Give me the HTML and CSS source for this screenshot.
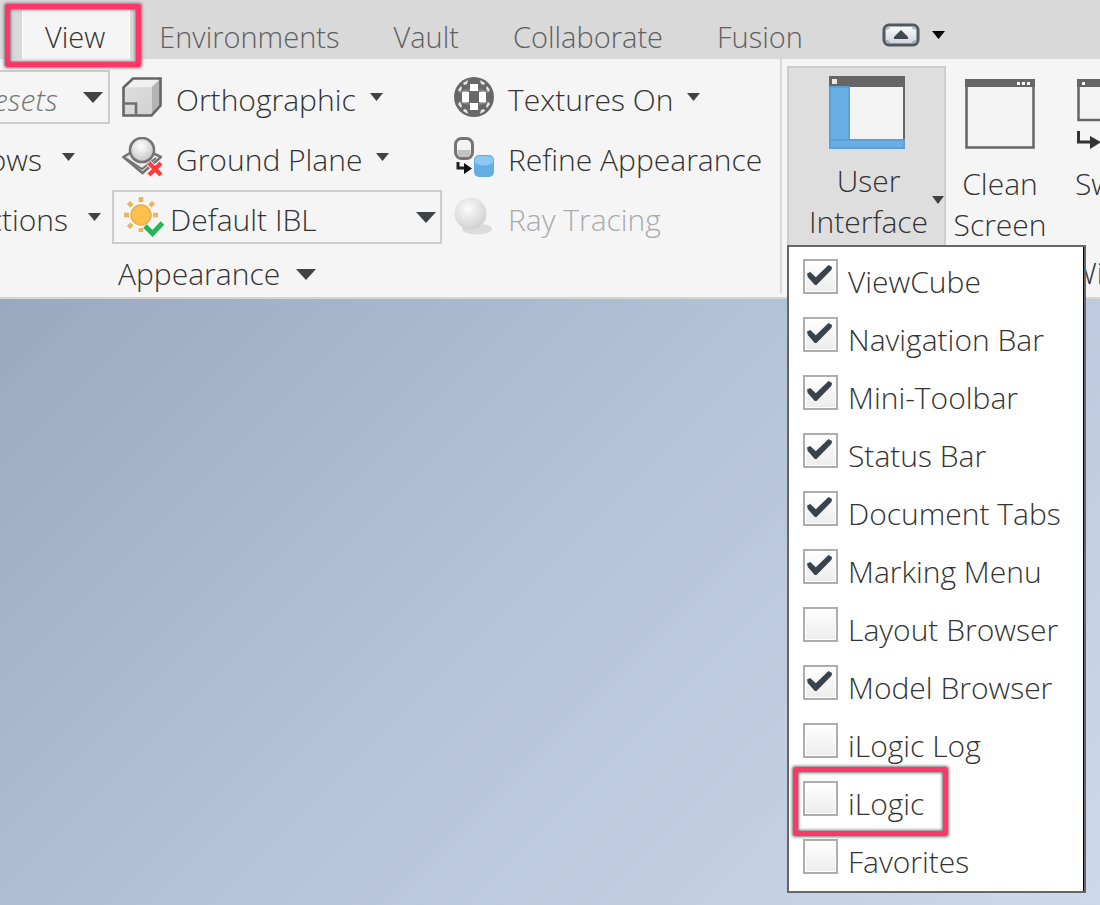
FILE: index.html
```html
<!DOCTYPE html>
<html lang="en">
<head>
<meta charset="utf-8">
<title>View ribbon</title>
<link rel="stylesheet" href="styles.css">
</head>
<body>
<svg class="defs" aria-hidden="true">
  <defs>
    <linearGradient id="face" x1="0" y1="0" x2="1" y2="1"><stop offset="0" stop-color="#e0e0e0"/><stop offset="1" stop-color="#cfcfcf"/></linearGradient>
    <radialGradient id="ball" cx=".45" cy=".35" r=".65"><stop offset="0" stop-color="#ffffff"/><stop offset="1" stop-color="#c4c4c4"/></radialGradient>
    <radialGradient id="pale" cx=".42" cy=".35" r=".65"><stop offset="0" stop-color="#fbfbfb"/><stop offset="1" stop-color="#d2d2d2"/></radialGradient>
    <linearGradient id="pill" x1="0" y1="0" x2="0" y2="1"><stop offset="0" stop-color="#ffffff"/><stop offset="1" stop-color="#cdd0da"/></linearGradient>
  </defs>
</svg>

<nav class="tabs">
  <a class="tab tab-active marked" href="#view">View</a>
  <a class="tab" href="#environments">Environments</a>
  <a class="tab" href="#vault">Vault</a>
  <a class="tab" href="#collaborate">Collaborate</a>
  <a class="tab" href="#fusion">Fusion</a>
  <button class="ribbon-toggle" type="button" aria-label="Ribbon display">
    <svg width="38" height="24" viewBox="0 0 38 24"><rect x="2" y="2" width="34" height="20" rx="5" fill="url(#pill)" stroke="#515961" stroke-width="3"/><path d="M5 7V5h3M30 5h3v2M5 17v2h3M30 19h3v-2" fill="none" stroke="#8b9199" stroke-width="1"/><path d="M12 16v-2l7-7 7 7v2z" fill="#3f464e"/></svg>
    <svg width="13" height="8" viewBox="0 0 13 8"><path d="M0 0h13L6.500 8z" fill="#000"/></svg>
  </button>
</nav>

<section class="ribbon" id="view">
  <div class="column column-cut">
    <div class="combo combo-cut">
      <select class="combo-select preset" aria-label="Presets"><option>esets</option></select>
      <svg class="arrow" width="20" height="11" viewBox="0 0 20 11"><path d="M0 0h20L10 11z"/></svg>
    </div>
    <button class="command" type="button"><span>ows</span><svg class="arrow" width="13" height="8" viewBox="0 0 13 8"><path d="M0 0h13L6.500 8z"/></svg></button>
    <button class="command command-end" type="button"><span>ctions</span><svg class="arrow" width="13" height="8" viewBox="0 0 13 8"><path d="M0 0h13L6.500 8z"/></svg></button>
  </div>

  <div class="column column-appearance">
    <button class="command" type="button">
      <svg width="40" height="40" viewBox="0 0 40 40"><path d="M1.500 10.500 11 1.500h27.500v27L29.500 38.500h-28z" fill="url(#face)"/><path d="M2 10.500 11 2h27l-8.500 8z" fill="#f0f0f0"/><path d="M38.500 2v27L30 38V10z" fill="#b4b4b4"/><path d="M1.500 10.500 11 1.500h27.500v27L29.500 38.500h-28z" fill="none" stroke="#656565" stroke-width="2.600"/><path d="M1.500 26.500H14v12" fill="#d9d9d9" stroke="#6f6f6f" stroke-width="2.600"/></svg>
      <span>Orthographic</span>
      <svg class="arrow" width="13" height="8" viewBox="0 0 13 8"><path d="M0 0h13L6.500 8z"/></svg>
    </button>
    <button class="command" type="button">
      <svg width="40" height="40" viewBox="0 0 40 40"><path d="M1.500 20 8 16h23l8 4-18.500 16z" fill="#ededed" stroke="#747474" stroke-width="2.600"/><path d="M5 22l15 10 14-11" fill="none" stroke="#747474" stroke-width="2"/><circle cx="20" cy="13" r="12" fill="url(#ball)" stroke="#757575" stroke-width="2.600"/><path d="M27 26l12 12M39 26L27 38" stroke="#fff" stroke-width="6"/><path d="M27 26l12 12M39 26L27 38" stroke="#ff3b3b" stroke-width="4.500"/></svg>
      <span>Ground Plane</span>
      <svg class="arrow" width="13" height="8" viewBox="0 0 13 8"><path d="M0 0h13L6.500 8z"/></svg>
    </button>
    <div class="combo">
      <svg width="40" height="40" viewBox="0 0 40 40"><circle cx="17" cy="18" r="10" fill="#ffc04d" stroke="#e8ae4a" stroke-width="1.500"/><path d="M17 0v5M17 31v4M0 18h5M29 18h5M4.500 5.500l3.500 3.500M26 9l3.500-3.500M4.500 30.500 8 27" stroke="#e8b65e" stroke-width="4.500"/><path d="M21 29l7.500 7.500L38.500 26" fill="none" stroke="#28b457" stroke-width="5"/></svg>
      <select class="combo-select" aria-label="Lighting style"><option>Default IBL</option></select>
      <svg class="arrow" width="20" height="11" viewBox="0 0 20 11"><path d="M0 0h20L10 11z"/></svg>
    </div>
    <button class="panel-title" type="button">Appearance<svg class="arrow" width="20" height="11" viewBox="0 0 20 11"><path d="M0 0h20L10 11z"/></svg></button>
  </div>

  <div class="column column-render">
    <button class="command" type="button">
      <svg width="40" height="40" viewBox="0 0 40 40"><circle cx="20" cy="20" r="20" fill="#686868"/><path d="M5 15Q20 11 35 15M5 25Q20 29 35 25" fill="none" stroke="#828282" stroke-width="2"/><g fill="#fff"><path d="M16 7h8v7h-8zM16 26h8v7h-8zM8 15q3-1 7 0v10q-4 1-7 0zM25 15q4-1 7 0v10q-3 1-7 0z"/><path d="M9 6l5-3-1 4-3 1zM31 6l-5-3 1 4 3 1zM9 34l5 3-1-4-3-1zM31 34l-5 3 1-4 3-1zM4 13l3-4 1 2-2 4zM36 13l-3-4-1 2 2 4zM4 27l3 4 1-2-2-4zM36 27l-3 4-1-2 2-4z" opacity=".85"/></g></svg>
      <span>Textures On</span>
      <svg class="arrow" width="13" height="8" viewBox="0 0 13 8"><path d="M0 0h13L6.500 8z"/></svg>
    </button>
    <button class="command" type="button">
      <svg width="40" height="40" viewBox="0 0 40 40"><rect x="1.500" y="1.500" width="17" height="20" rx="6" fill="#f3f3f3" stroke="#747474" stroke-width="3"/><path d="M3.500 13h13v4q-1 3-4 3h-5q-3 0-4-3z" fill="#c2c2c2"/><rect x="20" y="18" width="20" height="22" rx="5" fill="#64ade3"/><path d="M21 22q1-3 4-3h10q3 0 4 3v4q-9 5-18 0z" fill="#8bc8f4"/><path d="M4 25v6h7" fill="none" stroke="#222" stroke-width="3"/><path d="M10 26l8 5.500L10 37z" fill="#111"/></svg>
      <span>Refine Appearance</span>
    </button>
    <button class="command" type="button" disabled>
      <svg width="40" height="40" viewBox="0 0 40 40"><ellipse cx="23" cy="32" rx="15" ry="5.500" fill="#dcdcdc"/><circle cx="16.500" cy="16.500" r="16" fill="url(#pale)"/></svg>
      <span>Ray Tracing</span>
    </button>
  </div>

  <div class="windows">
    <div class="large-row">
      <div class="menu-anchor">
        <button class="large large-open" type="button" aria-expanded="true">
          <svg width="76" height="73" viewBox="0 0 76 73"><rect x="1" y="1" width="74" height="71" fill="#f3f3f3" stroke="#666" stroke-width="2"/><path d="M0 0h76v11H0z" fill="#666"/><path d="M3 3h5v5H3z" fill="#e8e8e8"/><path d="M1 11h19v53h55v8H1z" fill="#68afe6" stroke="#5b9fd4" stroke-width="2"/><path d="M1 64h19" stroke="#5b9fd4" stroke-width="2"/></svg>
          <span>User<br>Interface</span>
          <svg class="arrow" width="12" height="8" viewBox="0 0 12 8"><path d="M0 0h12L6 8z"/></svg>
        </button>
        <div class="menu">
          <label class="item"><input class="check" type="checkbox" checked>ViewCube</label>
          <label class="item"><input class="check" type="checkbox" checked>Navigation Bar</label>
          <label class="item"><input class="check" type="checkbox" checked>Mini-Toolbar</label>
          <label class="item"><input class="check" type="checkbox" checked>Status Bar</label>
          <label class="item"><input class="check" type="checkbox" checked>Document Tabs</label>
          <label class="item"><input class="check" type="checkbox" checked>Marking Menu</label>
          <label class="item"><input class="check" type="checkbox">Layout Browser</label>
          <label class="item"><input class="check" type="checkbox" checked>Model Browser</label>
          <label class="item"><input class="check" type="checkbox">iLogic Log</label>
          <label class="item marked"><input class="check" type="checkbox">iLogic</label>
          <label class="item"><input class="check" type="checkbox">Favorites</label>
        </div>
      </div>
      <button class="large large-clean" type="button">
        <svg width="70" height="70" viewBox="0 0 70 70"><rect x="1.500" y="1.500" width="67" height="67" fill="#f3f3f3" stroke="#666" stroke-width="2.500"/><path d="M0 0h70v8H0z" fill="#666"/><path d="M52 3h3v3h-3zM57 3h3v3h-3zM62 3h3v3h-3z" fill="#fff"/></svg>
        <span>Clean<br>Screen</span>
      </button>
      <button class="large large-switch" type="button">
        <svg width="70" height="70" viewBox="-2 0 70 70"><path d="M1.500 2h60v39h-60z" fill="#f3f3f3" stroke="#666" stroke-width="2.500"/><path d="M0 0h63v8H0z" fill="#666"/><path d="M5 3h3v3H5z" fill="#fff"/><path d="M1.500 52v11h13" fill="none" stroke="#333" stroke-width="3"/><path d="M13 57l11 6-11 7z" fill="#333"/></svg>
        <span>Sw</span>
      </button>
    </div>
    <div class="windows-title">Wi</div>
  </div>
</section>

<main class="canvas"></main>
</body>
</html>
```
FILE: styles.css
```css
* { box-sizing: border-box; }

body {
  margin: 0;
  min-height: 100vh;
  display: flex;
  flex-direction: column;
  overflow: hidden;
  font-family: "Open Sans", "Noto Sans", sans-serif;
  font-size: 30px;
  font-weight: 350;
  line-height: 40px;
  color: #333;
}

button, select {
  font: inherit;
  color: inherit;
  background: none;
  border: 0;
  padding: 0;
  margin: 0;
}

svg { flex: none; }
.defs { position: absolute; width: 0; height: 0; }
.arrow { fill: #404244; pointer-events: none; }

.tabs {
  display: flex;
  align-items: stretch;
  gap: 54px;
  height: 59px;
  padding: 10px 0 0 22px;
  background: #d9d9d9;
  font-size: 29px;
  white-space: nowrap;
}
.tab {
  color: #606060;
  text-decoration: none;
  line-height: 54px;
}
.tab-active {
  margin-right: -25px;
  padding: 0 24px 0 22px;
  line-height: 52px;
  color: #333;
  background: #f5f5f5;
  border: 1px solid #fff;
  border-bottom: 0;
}
.ribbon-toggle {
  display: flex;
  align-items: center;
  gap: 12px;
  margin-left: 25px;
}

.marked { position: relative; }
.marked::after {
  content: "";
  position: absolute;
  border: 5px solid #ff3668;
  border-radius: 2px;
  box-shadow: 0 0 3px 1px #777, inset 0 0 3px 1px #777;
  pointer-events: none;
}
.tab.marked::after { inset: -7px -12px -8px -18px; }
.item.marked::after { inset: -8px -24px -3px -10px; }

.ribbon {
  display: flex;
  min-height: 240px;
  background: #f5f5f5;
  border-bottom: 2px solid #d4d4d4;
  white-space: nowrap;
}
.column {
  flex: none;
  display: flex;
  flex-direction: column;
  gap: 6px;
  padding-top: 11px;
}
.column-cut { width: 112px; padding-right: 2px; overflow: hidden; }
.column-appearance { width: 330px; }
.column-render { width: 340px; padding-left: 12px; border-right: 2px solid #d9d9d9; margin-bottom: 4px; }

.command {
  display: flex;
  align-items: center;
  gap: 14px;
  height: 54px;
}
.column-appearance .command { padding-left: 10px; }
.column-cut .command { justify-content: flex-end; gap: 20px; padding-right: 35px; }
.column-cut .command-end { padding-right: 9px; }
.command span { padding-top: 5px; }
.command:disabled { color: #aaa; }

.combo {
  display: flex;
  align-items: center;
  height: 54px;
  padding: 0 4px 0 10px;
  border: 2px solid #ccc;
}
.combo-cut { border-left: 0; padding: 0 5px 0 0; }
.combo-select {
  flex: 1;
  min-width: 0;
  height: 50px;
  padding: 5px 0 0 6px;
  appearance: none;
}
.preset { padding-left: 0; margin-left: -7px; font-style: italic; color: #777; }

.panel-title {
  display: flex;
  align-items: center;
  gap: 16px;
  padding: 4px 0 0 6px;
}

.windows {
  flex: 1;
  min-width: 0;
  padding: 7px 0 0 5px;
}
.large-row { display: flex; }
.menu-anchor { position: relative; flex: none; }
.large {
  flex: none;
  display: flex;
  flex-direction: column;
  align-items: center;
  line-height: 41px;
  height: 179px;
  padding-top: 13px;
  gap: 14px;
}
.large-open {
  position: relative;
  width: 159px;
  padding-top: 8px;
  gap: 11px;
  background: #dedede;
  border: 2px solid #cdcdcd;
  border-bottom: 0;
}
.large-open span { padding-left: 4px; }
.large-open .arrow { position: absolute; right: 0; bottom: 41px; }
.large-clean { width: 108px; }
.large-switch { align-items: flex-start; margin-left: 21px; }
.windows-title { padding: 8px 0 0 283px; overflow: hidden; }

.menu {
  position: absolute;
  top: 179px;
  left: 0;
  width: 299px;
  display: flex;
  flex-direction: column;
  align-items: flex-start;
  padding: 6px 14px 0;
  background: #fff;
  border: 2px solid #666;
  box-shadow: inset -1px 0 #000;
}
.item {
  display: flex;
  align-items: flex-start;
  gap: 10px;
  height: 58px;
  line-height: 58px;
}
.check {
  appearance: none;
  width: 35px;
  height: 35px;
  margin: 6px 0 0;
  border: 2px solid #adadad;
  background: linear-gradient(#fff, #ececec);
  box-shadow: inset 0 0 0 1px #fff;
}
.check:checked::before {
  content: "";
  display: block;
  width: 25px;
  height: 20px;
  margin: 4px 0 0 2px;
  background: #3a424b;
  clip-path: polygon(0 42%, 13% 35%, 35% 61%, 86% 0, 100% 10%, 98% 24%, 38% 100%, 31% 100%, 3% 60%);
}

.canvas {
  flex: 1;
  background: linear-gradient(135deg, #9aa9c0 0%, #b4c2d8 45%, #cdd9eb 100%);
}
```
